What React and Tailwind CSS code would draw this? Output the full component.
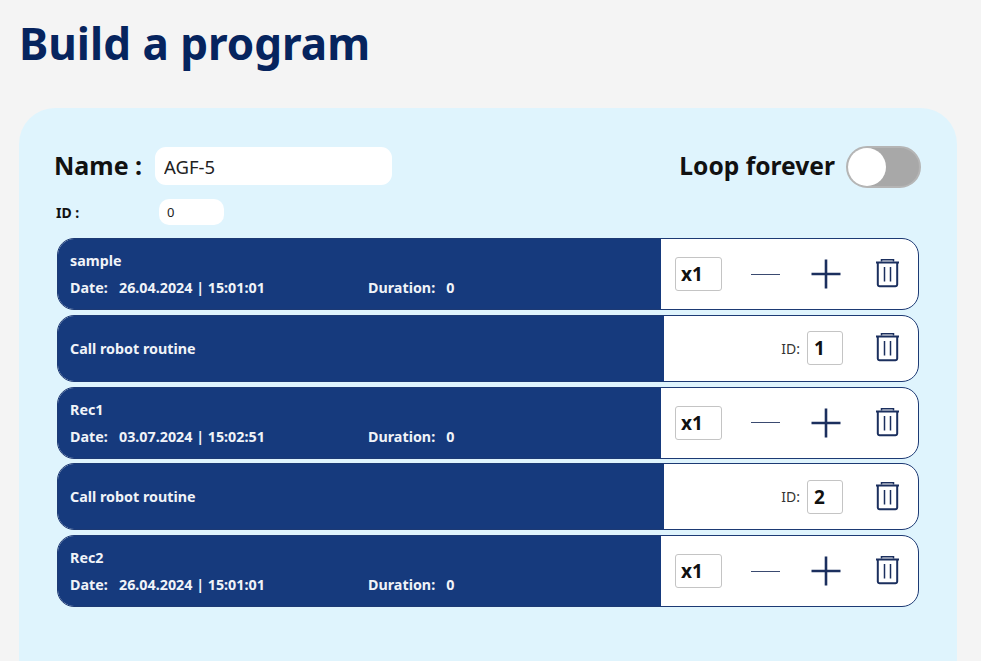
const font = { fontFamily: '"Noto Sans", sans-serif' };

function TrashIcon() {
  return (
    <svg className="-mt-[2px]" width="25" height="30" viewBox="0 0 25 30" fill="none" stroke="#1b2f5e" strokeWidth="2">
      <path d="M1 4.5h23" />
      <path d="M6.5 3.5V1.8h12v1.7" strokeWidth="1.5" />
      <path d="M2.8 5v21.5a1.8 1.8 0 0 0 1.8 1.8h15.8a1.8 1.8 0 0 0 1.8-1.8V5" />
      <path d="M9.5 9v14.5M15.5 9v14.5" strokeWidth="1.5" />
    </svg>
  );
}

function RecordingRow({ name, date }) {
  return (
    <div className="flex h-[72px] rounded-[17px] border border-[#1d3a74] bg-white overflow-hidden">
      <div className="w-[603px] shrink-0 bg-[#163a7d] pl-3 pt-[12px] text-[14.3px] font-bold text-[#f0f3f8]">
        <div className="leading-[20px]">{name}</div>
        <div className="flex mt-[7px] leading-[20px]">
          <span className="w-[298px] whitespace-pre">Date:   {date}</span>
          <span className="whitespace-pre">Duration:   0</span>
        </div>
      </div>
      <div className="flex-1 flex items-center pl-[14px]">
        <div className="w-[47px] h-[34px] border border-[#c4c4c4] rounded-[3px] pl-[5px] text-[19px] font-bold leading-[33px] text-[#111]">x1</div>
        <div className="ml-[29px] w-[29px] h-px bg-[#3a4a70]" />
        <svg className="ml-[31px]" width="30" height="30" viewBox="0 0 30 30" stroke="#1b2f5e" strokeWidth="2.6">
          <path d="M0.5 15h29M15 0.5v29" />
        </svg>
        <div className="ml-[34px]"><TrashIcon /></div>
      </div>
    </div>
  );
}

function RoutineRow({ id }) {
  return (
    <div className="flex h-[67px] rounded-[17px] border border-[#1d3a74] bg-white overflow-hidden">
      <div className="w-[606px] shrink-0 bg-[#163a7d] pl-3 flex items-center text-[14.3px] font-bold text-[#f0f3f8]">
        Call robot routine
      </div>
      <div className="flex-1 flex items-center justify-end pr-[18px]">
        <span className="text-[14px] text-[#333] mr-[7px]">ID:</span>
        <div className="w-[36px] h-[34px] border border-[#c4c4c4] rounded-[3px] pl-[6px] text-[19px] font-bold leading-[33px] text-[#111]">{id}</div>
        <div className="ml-[32px]"><TrashIcon /></div>
      </div>
    </div>
  );
}

export default function App() {
  return (
    <div className="h-[661px] overflow-hidden bg-[#f4f4f4] pl-[19px] pr-[24px]" style={font}>
      <h1 className="pt-[13px] text-[44px] leading-[60px] font-bold text-[#06245e]">Build a program</h1>
      <div className="mt-[35px] h-[600px] rounded-t-[36px] bg-[#dff4fd] pl-[38px] pr-[38px] pt-[37px]">
        <div className="flex items-center justify-between h-[42px]">
          <div className="flex items-center">
            <span className="w-[101px] -ml-[3px] text-[25px] font-bold text-[#111]">Name :</span>
            <input readOnly defaultValue="AGF-5" className="w-[237px] h-[38px] rounded-[11px] bg-white pl-[9px] text-[18.5px] text-[#222] outline-none" />
          </div>
          <div className="flex items-center">
            <span className="text-[24.6px] font-bold text-[#111] mr-[11px]">Loop forever</span>
            <div className="flex items-center w-[75px] h-[42px] mt-[2px] rounded-full bg-[#a8a8a8] border-2 border-[#b5b5b5] -mr-[2px]">
              <div className="w-[38px] h-[38px] rounded-full bg-white" />
            </div>
          </div>
        </div>
        <div className="flex items-center h-[28px] mt-[11px]">
          <span className="w-[103px] text-[14px] font-bold text-[#111] -ml-px">ID :</span>
          <input readOnly defaultValue="0" className="w-[65px] h-[26px] rounded-[10px] bg-white pl-[8px] text-[13px] text-[#222] outline-none" />
        </div>
        <div className="flex flex-col gap-[4.75px] mt-[12px]">
          <RecordingRow name="sample" date="26.04.2024 | 15:01:01" />
          <RoutineRow id="1" />
          <RecordingRow name="Rec1" date="03.07.2024 | 15:02:51" />
          <RoutineRow id="2" />
          <RecordingRow name="Rec2" date="26.04.2024 | 15:01:01" />
        </div>
      </div>
    </div>
  );
}
